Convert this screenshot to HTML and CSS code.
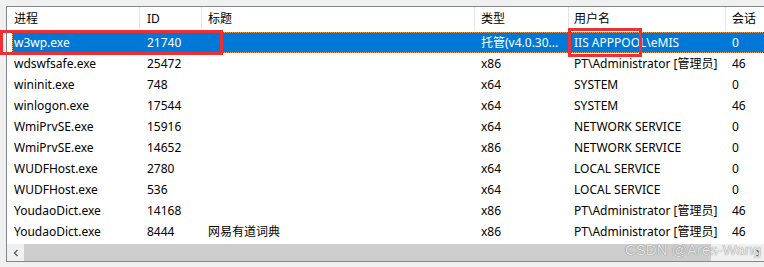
FILE: index.html
```html
<!DOCTYPE html>
<html>
<head>
<meta charset="utf-8">
<link rel="stylesheet" href="styles.css">
</head>
<body>
<div class="frame">
  <div class="listbox">
    <div class="row header">
      <div class="c c1">进程</div>
      <div class="c c2">ID</div>
      <div class="c c3">标题</div>
      <div class="c c4">类型</div>
      <div class="c c5">用户名</div>
      <div class="c c6">会话</div>
    </div>
    <div class="row selected">
      <div class="c c1">w3wp.exe</div>
      <div class="c c2">21740</div>
      <div class="c c3"></div>
      <div class="c c4">托管(v4.0.30...</div>
      <div class="c c5">IIS APPPOOL\eMIS</div>
      <div class="c c6">0</div>
    </div>
    <div class="row">
      <div class="c c1">wdswfsafe.exe</div>
      <div class="c c2">25472</div>
      <div class="c c3"></div>
      <div class="c c4">x86</div>
      <div class="c c5">PT\Administrator [管理员]</div>
      <div class="c c6">46</div>
    </div>
    <div class="row">
      <div class="c c1">wininit.exe</div>
      <div class="c c2">748</div>
      <div class="c c3"></div>
      <div class="c c4">x64</div>
      <div class="c c5">SYSTEM</div>
      <div class="c c6">0</div>
    </div>
    <div class="row">
      <div class="c c1">winlogon.exe</div>
      <div class="c c2">17544</div>
      <div class="c c3"></div>
      <div class="c c4">x64</div>
      <div class="c c5">SYSTEM</div>
      <div class="c c6">46</div>
    </div>
    <div class="row">
      <div class="c c1">WmiPrvSE.exe</div>
      <div class="c c2">15916</div>
      <div class="c c3"></div>
      <div class="c c4">x64</div>
      <div class="c c5">NETWORK SERVICE</div>
      <div class="c c6">0</div>
    </div>
    <div class="row">
      <div class="c c1">WmiPrvSE.exe</div>
      <div class="c c2">14652</div>
      <div class="c c3"></div>
      <div class="c c4">x86</div>
      <div class="c c5">NETWORK SERVICE</div>
      <div class="c c6">0</div>
    </div>
    <div class="row">
      <div class="c c1">WUDFHost.exe</div>
      <div class="c c2">2780</div>
      <div class="c c3"></div>
      <div class="c c4">x64</div>
      <div class="c c5">LOCAL SERVICE</div>
      <div class="c c6">0</div>
    </div>
    <div class="row">
      <div class="c c1">WUDFHost.exe</div>
      <div class="c c2">536</div>
      <div class="c c3"></div>
      <div class="c c4">x64</div>
      <div class="c c5">LOCAL SERVICE</div>
      <div class="c c6">0</div>
    </div>
    <div class="row">
      <div class="c c1">YoudaoDict.exe</div>
      <div class="c c2">14168</div>
      <div class="c c3"></div>
      <div class="c c4">x86</div>
      <div class="c c5">PT\Administrator [管理员]</div>
      <div class="c c6">46</div>
    </div>
    <div class="row">
      <div class="c c1">YoudaoDict.exe</div>
      <div class="c c2">8444</div>
      <div class="c c3">网易有道词典</div>
      <div class="c c4">x86</div>
      <div class="c c5">PT\Administrator [管理员]</div>
      <div class="c c6">46</div>
    </div>
    <div class="hscroll">
      <div class="arrow">
        <svg width="8" height="8" viewBox="0 0 8 8"><path d="M5.5 1 L2.5 4 L5.5 7" fill="none" stroke="#606060" stroke-width="1.4"/></svg>
      </div>
      <div class="thumb"></div>
      <div class="track"></div>
      <div class="arrow">
        <svg width="8" height="8" viewBox="0 0 8 8"><path d="M2.5 1 L5.5 4 L2.5 7" fill="none" stroke="#606060" stroke-width="1.4"/></svg>
      </div>
    </div>
  </div>
  <div class="mark mark1"></div>
  <div class="mark mark2"></div>
  <div class="watermark">CSDN @Ares-Wang</div>
</div>
</body>
</html>
```

FILE: styles.css
```css
html, body {
  margin: 0;
  padding: 0;
  background: #f0f0f0;
}
body {
  width: 764px;
  height: 267px;
  overflow: hidden;
  font-family: "Noto Sans", "Noto Sans CJK SC", sans-serif;
  font-size: 12px;
  color: #000;
}
.frame {
  position: relative;
  padding: 6px 0 0 6px;
  height: 261px;
  box-sizing: border-box;
}
.listbox {
  width: 780px;
  height: 256px;
  box-sizing: border-box;
  border: 1px solid #828790;
  background: #fff;
  display: flex;
  flex-direction: column;
}
.row {
  display: grid;
  grid-template-columns: 133px 62px 273px 94px 157px 1fr;
  height: 21px;
  align-items: center;
  white-space: nowrap;
}
.c {
  padding-left: 6px;
  overflow: hidden;
  line-height: 21px;
  height: 21px;
}
.c1, .c2 { padding-left: 7px; }
.c5 { padding-left: 5px; }
.header {
  height: 25px;
  align-items: stretch;
}
.header .c {
  height: 24px;
  line-height: 24px;
  border-right: 1px solid #e5e5e5;
}
.header .c6 { border-right: none; }
.selected {
  background: #0078d7;
  color: #fff;
  margin-left: 5px;
  grid-template-columns: 128px 62px 273px 94px 157px 1fr;
  outline: 1px dotted #e8a05a;
  outline-offset: -1px;
}
.selected .c1 { padding-left: 2px; }
.hscroll {
  margin-top: 2px;
  height: 17px;
  display: flex;
  background: #f0f0f0;
}
.arrow {
  width: 17px;
  height: 17px;
  display: flex;
  align-items: center;
  justify-content: center;
  flex: none;
}
.thumb {
  width: 687px;
  background: #cdcdcd;
  flex: none;
}
.track {
  width: 38px;
  flex: none;
}
.mark {
  position: absolute;
  border: 3px solid #ee3035;
  box-sizing: border-box;
}
.mark1 {
  left: 0;
  top: 30px;
  width: 223px;
  height: 25px;
}
.mark2 {
  left: 568px;
  top: 28px;
  width: 74px;
  height: 29px;
}
.watermark {
  position: absolute;
  left: 625px;
  top: 241px;
  font-family: "Liberation Sans", "Noto Sans", sans-serif;
  font-size: 15px;
  color: #e6e6e6;
  text-shadow: 0 0 1px rgba(0, 0, 0, 0.55);
}
```
